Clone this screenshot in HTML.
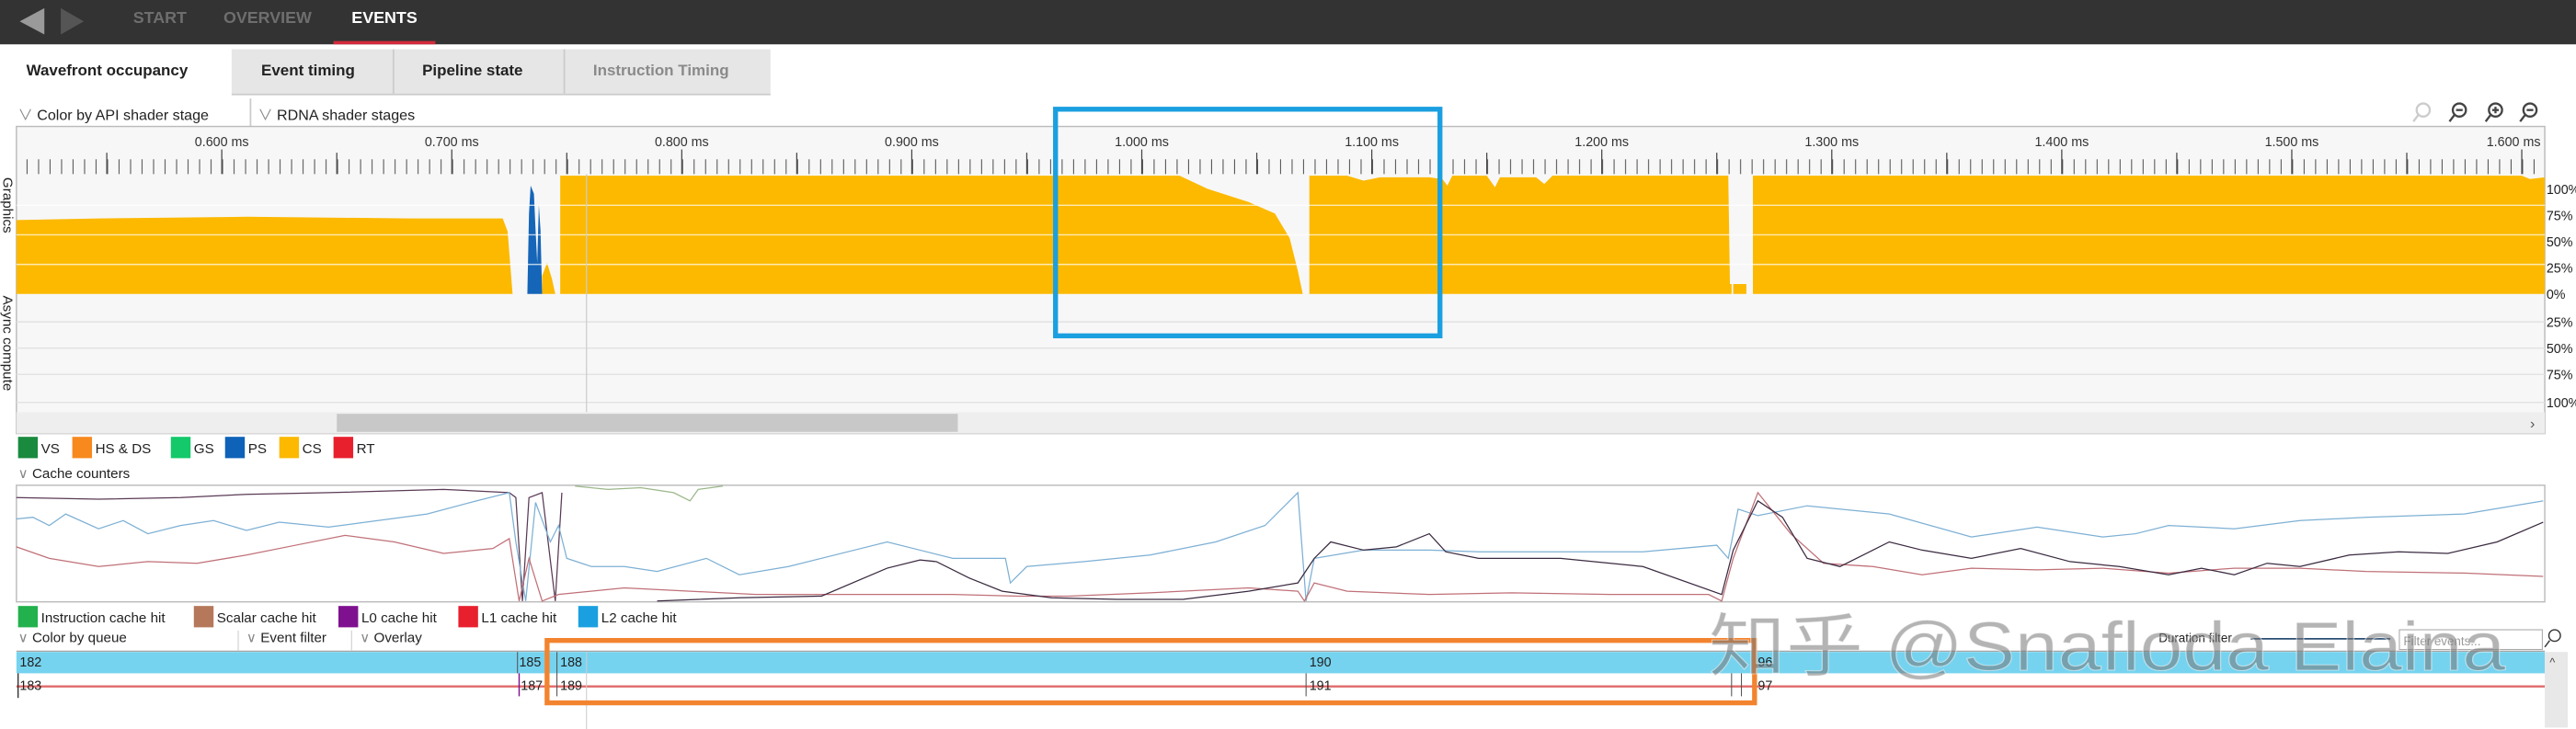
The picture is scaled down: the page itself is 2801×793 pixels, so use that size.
<!DOCTYPE html>
<html><head><meta charset="utf-8"><style>
html,body{margin:0;padding:0;width:2801px;height:792px;overflow:hidden;background:#fff}
#w{position:absolute;left:0;top:0;width:1568px;height:444px;transform:scale(1.78635);transform-origin:0 0;font-family:"Liberation Sans","Noto Sans CJK SC",sans-serif;font-size:9px;color:#222}
.a{position:absolute;white-space:nowrap}
</style></head><body><div id="w">
<div class="a" style="left:0;top:0;width:1568px;height:27px;background:#333"></div>
<svg class="a" style="left:0;top:0" width="60" height="27"><polygon points="27,5 27,21 12,13" fill="#9a9a9a"/><polygon points="37,5 37,21 51,13" fill="#555"/></svg>
<div class="a" style="left:81px;top:6px;font-size:10px;font-weight:bold;color:#6e6e6e">START</div>
<div class="a" style="left:136px;top:6px;font-size:10px;font-weight:bold;color:#6e6e6e">OVERVIEW</div>
<div class="a" style="left:214px;top:6px;font-size:10px;font-weight:bold;color:#fff">EVENTS</div>
<div class="a" style="left:203px;top:25px;width:62px;height:2px;background:#d42a3c"></div>
<div class="a" style="left:141px;top:30px;width:328px;height:27px;background:#e6e6e6;border-bottom:1px solid #ccc"></div>
<div class="a" style="left:239px;top:30px;width:1px;height:27px;background:#ccc"></div>
<div class="a" style="left:343px;top:30px;width:1px;height:27px;background:#ccc"></div>
<div class="a" style="left:16px;top:38px;font-size:9.5px;font-weight:bold">Wavefront occupancy</div>
<div class="a" style="left:159px;top:38px;font-size:9.5px;font-weight:bold">Event timing</div>
<div class="a" style="left:257px;top:38px;font-size:9.5px;font-weight:bold">Pipeline state</div>
<div class="a" style="left:361px;top:38px;font-size:9.5px;font-weight:bold;color:#8a8a8a">Instruction Timing</div>
<div class="a" style="left:11px;top:63px;font-size:9px"><span style="color:#888">&#8744;</span> Color by API shader stage</div>
<div class="a" style="left:152px;top:60px;width:1px;height:17px;background:#ccc"></div>
<div class="a" style="left:157px;top:63px;font-size:9px"><span style="color:#888">&#8744;</span> RDNA shader stages</div>
<svg class="a" style="left:1465px;top:60px" width="90" height="16" fill="none" stroke-width="1.3">
<g stroke="#ccc"><circle cx="10" cy="7" r="4"/><line x1="7" y1="10" x2="4" y2="14"/></g>
<g stroke="#444"><circle cx="32" cy="7" r="4"/><line x1="29" y1="10" x2="26" y2="14"/><path d="M30 7h4"/></g>
<g stroke="#444"><circle cx="54" cy="7" r="4"/><line x1="51" y1="10" x2="48" y2="14"/><path d="M52 7h4M54 5v4"/></g>
<g stroke="#444"><circle cx="75" cy="7" r="4"/><line x1="72" y1="10" x2="69" y2="14"/><path d="M73 7h4"/></g>
</svg>
<svg class="a" style="left:0;top:0" width="1568" height="444" font-family="Liberation Sans, sans-serif">
<defs><pattern id="mt" x="2" y="0" width="7" height="10" patternUnits="userSpaceOnUse"><line x1="0.5" y1="0" x2="0.5" y2="10" stroke="#555" stroke-width="0.6"/></pattern></defs>
<rect x="10" y="77" width="1539" height="187" fill="#f7f7f7" stroke="#bbb" stroke-width="0.8"/>
<rect x="10" y="97" width="1539" height="9" fill="url(#mt)"/>
<g stroke="#444" stroke-width="0.7">
<line x1="135" y1="91" x2="135" y2="106"/><line x1="275" y1="91" x2="275" y2="106"/><line x1="415" y1="91" x2="415" y2="106"/><line x1="555" y1="91" x2="555" y2="106"/><line x1="695" y1="91" x2="695" y2="106"/><line x1="835" y1="91" x2="835" y2="106"/><line x1="975" y1="91" x2="975" y2="106"/><line x1="1115" y1="91" x2="1115" y2="106"/><line x1="1255" y1="91" x2="1255" y2="106"/><line x1="1395" y1="91" x2="1395" y2="106"/><line x1="1535" y1="91" x2="1535" y2="106"/>
<line x1="65" y1="93" x2="65" y2="106"/><line x1="205" y1="93" x2="205" y2="106"/><line x1="345" y1="93" x2="345" y2="106"/><line x1="485" y1="93" x2="485" y2="106"/><line x1="625" y1="93" x2="625" y2="106"/><line x1="765" y1="93" x2="765" y2="106"/><line x1="905" y1="93" x2="905" y2="106"/><line x1="1045" y1="93" x2="1045" y2="106"/><line x1="1185" y1="93" x2="1185" y2="106"/><line x1="1325" y1="93" x2="1325" y2="106"/><line x1="1465" y1="93" x2="1465" y2="106"/>
</g>
<g font-size="8" fill="#333" text-anchor="middle">
<text x="135" y="89">0.600 ms</text><text x="275" y="89">0.700 ms</text><text x="415" y="89">0.800 ms</text><text x="555" y="89">0.900 ms</text><text x="695" y="89">1.000 ms</text><text x="835" y="89">1.100 ms</text><text x="975" y="89">1.200 ms</text><text x="1115" y="89">1.300 ms</text><text x="1255" y="89">1.400 ms</text><text x="1395" y="89">1.500 ms</text><text x="1530" y="89">1.600 ms</text>
</g>
<path fill="#fcb900" d="M10 179V134L60 133L150 132L250 133L306 133L309 141L312 179Z M330 179V168L333 160L336 170L338 179Z M341 179V107H718L735 115L760 123L776 130L785 145L790 165L793 179Z M797 179V107H820L830 110L840 108H870L878 109L881 113L884 107H905L910 114L913 108H935L940 112L945 107H1052L1053 173H1054V179Z M1055 179V173H1063V179Z M1067 179V107H1535L1540 109L1549 108V179Z"/>
<path fill="#1565b8" d="M321 179L322 130L323 113L325 118L326 140L327 160L328 125L329 140L330 179Z"/>
<g stroke="#fff" stroke-opacity="0.7" stroke-width="0.8"><line x1="10" y1="125" x2="1549" y2="125"/><line x1="10" y1="143" x2="1549" y2="143"/><line x1="10" y1="161" x2="1549" y2="161"/></g>
<g stroke="#e2e2e2" stroke-width="0.8"><line x1="10" y1="196" x2="1549" y2="196"/><line x1="10" y1="212" x2="1549" y2="212"/><line x1="10" y1="228" x2="1549" y2="228"/><line x1="10" y1="245" x2="1549" y2="245"/></g>
<line x1="357" y1="106" x2="357" y2="251" stroke="#ccc" stroke-width="0.7"/>
<rect x="10" y="251" width="1539" height="13" fill="#eee"/>
<rect x="205" y="252" width="378" height="11" fill="#c8c8c8"/>
<text x="1540" y="261" font-size="9" fill="#555">&#8250;</text>
<g font-size="8" fill="#222"><text x="1550" y="118">100%</text><text x="1550" y="134">75%</text><text x="1550" y="150">50%</text><text x="1550" y="166">25%</text><text x="1550" y="182">0%</text><text x="1550" y="199">25%</text><text x="1550" y="215">50%</text><text x="1550" y="231">75%</text><text x="1550" y="248">100%</text></g>
<text transform="translate(2,108) rotate(90)" font-size="8.5" fill="#222">Graphics</text>
<text transform="translate(2,180) rotate(90)" font-size="8.5" fill="#222">Async compute</text>
<rect x="642.5" y="66.5" width="234" height="138" fill="none" stroke="#1a9fe0" stroke-width="3"/>
<g font-size="8.5" fill="#222">
<rect x="11" y="266" width="12" height="13" fill="#1a8a3e"/><text x="25" y="276">VS</text>
<rect x="44" y="266" width="12" height="13" fill="#f7891f"/><text x="58" y="276">HS &amp; DS</text>
<rect x="104" y="266" width="12" height="13" fill="#14c96a"/><text x="118" y="276">GS</text>
<rect x="137" y="266" width="12" height="13" fill="#0e62b8"/><text x="151" y="276">PS</text>
<rect x="170" y="266" width="12" height="13" fill="#fcb900"/><text x="184" y="276">CS</text>
<rect x="203" y="266" width="12" height="13" fill="#e8202e"/><text x="217" y="276">RT</text>
<text x="11" y="291"><tspan fill="#888">&#8744;</tspan> Cache counters</text>
</g>
<rect x="10" y="295.5" width="1539" height="71" fill="#fff" stroke="#bbb" stroke-width="0.8"/>
<g fill="none" stroke-width="0.7">
<polyline stroke="#5a3a55" points="10,303 60,304 110,303 150,301 200,300 270,298 310,300 314,303 318,366 322,303 330,300 338,366 342,300"/>
<polyline stroke="#7db0d4" points="10,316 20,315 30,320 40,313 60,322 75,317 90,325 110,320 130,317 150,323 170,318 200,321 230,317 260,313 290,305 310,300 314,330 320,366 326,306 335,330 340,320 345,340 360,345 380,345 400,348 430,340 450,350 480,345 520,335 540,330 560,335 580,340 600,340 612,340 615,355 625,345 660,342 700,338 740,330 770,320 790,300 795,366 800,340 830,335 870,335 900,336 950,336 1000,336 1045,332 1052,340 1058,310 1070,314 1100,308 1150,313 1200,327 1240,321 1280,327 1300,325 1320,320 1360,322 1400,317 1440,315 1500,313 1548,305"/>
<polyline stroke="#c07078" points="10,333 30,340 60,345 90,342 120,343 150,338 180,332 210,326 240,330 270,337 300,334 310,328 316,366 322,340 330,366 340,362 380,358 420,360 460,362 500,362 540,362 580,362 620,363 650,363 700,361 760,358 790,360 794,366 800,355 820,360 870,362 920,361 980,362 1040,362 1048,366 1055,340 1070,300 1090,325 1110,343 1140,345 1170,350 1200,346 1240,347 1280,346 1320,349 1360,346 1400,346 1440,348 1500,349 1548,351"/>
<polyline stroke="#3a2a40" points="400,366 450,364 500,363 540,346 560,341 570,342 590,352 610,360 640,364 680,365 720,365 760,360 790,355 800,340 810,330 830,335 850,333 870,325 880,336 900,340 950,340 1000,345 1048,362 1055,335 1070,305 1085,315 1100,340 1120,345 1140,335 1150,330 1170,335 1200,340 1230,334 1260,342 1290,345 1320,350 1340,346 1360,350 1380,343 1400,345 1430,338 1460,336 1490,337 1520,330 1548,318"/>
<polyline stroke="#9bb88a" points="350,296 370,298 390,297 410,300 420,305 425,298 440,296"/>
</g>
<g font-size="8.5" fill="#222">
<rect x="11" y="369" width="12" height="13" fill="#22b14c"/><text x="25" y="379">Instruction cache hit</text>
<rect x="118" y="369" width="12" height="13" fill="#b5785a"/><text x="132" y="379">Scalar cache hit</text>
<rect x="206" y="369" width="12" height="13" fill="#7f1190"/><text x="220" y="379">L0 cache hit</text>
<rect x="279" y="369" width="12" height="13" fill="#e8202e"/><text x="293" y="379">L1 cache hit</text>
<rect x="352" y="369" width="12" height="13" fill="#1aa0e0"/><text x="366" y="379">L2 cache hit</text>
<text x="11" y="391"><tspan fill="#888">&#8744;</tspan> Color by queue</text>
<text x="150" y="391"><tspan fill="#888">&#8744;</tspan> Event filter</text>
<text x="219" y="391"><tspan fill="#888">&#8744;</tspan> Overlay</text>
<text x="1314" y="391" font-size="7.5">Duration filter</text>
</g>
<line x1="145" y1="384" x2="145" y2="396" stroke="#ccc" stroke-width="0.6"/>
<line x1="214" y1="384" x2="214" y2="396" stroke="#ccc" stroke-width="0.6"/>
<line x1="1370" y1="389" x2="1455" y2="389" stroke="#2c4f75" stroke-width="1"/>
<rect x="1460.5" y="383.5" width="87" height="12" fill="#fff" stroke="#aaa" stroke-width="0.6"/>
<text x="1463" y="393" font-size="7.5" fill="#999">Filter events...</text>
<circle cx="1555" cy="387" r="3.5" fill="none" stroke="#333" stroke-width="0.8"/><line x1="1552" y1="390" x2="1549" y2="394" stroke="#333" stroke-width="0.8"/>
<rect x="10" y="397" width="1539" height="13" fill="#76d3ef"/>
<line x1="10" y1="418" x2="1549" y2="418" stroke="#e06a6a" stroke-width="1.3"/>
<line x1="10" y1="396.5" x2="1549" y2="396.5" stroke="#999" stroke-width="0.6"/>
<g stroke="#555" stroke-width="0.6"><line x1="315" y1="397" x2="315" y2="410"/><line x1="339" y1="397" x2="339" y2="424"/><line x1="795" y1="410" x2="795" y2="424"/><line x1="1054" y1="410" x2="1054" y2="424"/><line x1="1060" y1="410" x2="1060" y2="424"/></g>
<line x1="11" y1="410" x2="11" y2="425" stroke="#333" stroke-width="0.8"/>
<line x1="316" y1="410" x2="316" y2="424" stroke="#7f1190" stroke-width="0.8"/>
<line x1="357" y1="397" x2="357" y2="444" stroke="#ccc" stroke-width="0.6"/>
<g font-size="8" fill="#222"><text x="12" y="406">182</text><text x="316" y="406">185</text><text x="341" y="406">188</text><text x="797" y="406">190</text><text x="1070" y="406">96</text>
<text x="12" y="420">183</text><text x="317" y="420">187</text><text x="341" y="420">189</text><text x="797" y="420">191</text><text x="1070" y="420">97</text></g>
<rect x="1549" y="397" width="14" height="46" fill="#e8e8e8"/><text x="1552" y="406" font-size="7" fill="#444">^</text>
<rect x="333" y="390" width="735" height="38" fill="none" stroke="#f3842f" stroke-width="3"/>
<text x="1040" y="408" font-size="42" textLength="485" lengthAdjust="spacingAndGlyphs" fill="#777" fill-opacity="0.55" stroke="#fff" stroke-opacity="0.5" stroke-width="0.6" font-family="Liberation Sans, Noto Sans CJK SC, sans-serif">知乎 @Snafloda Elaina</text>
</svg>
</div></body></html>
